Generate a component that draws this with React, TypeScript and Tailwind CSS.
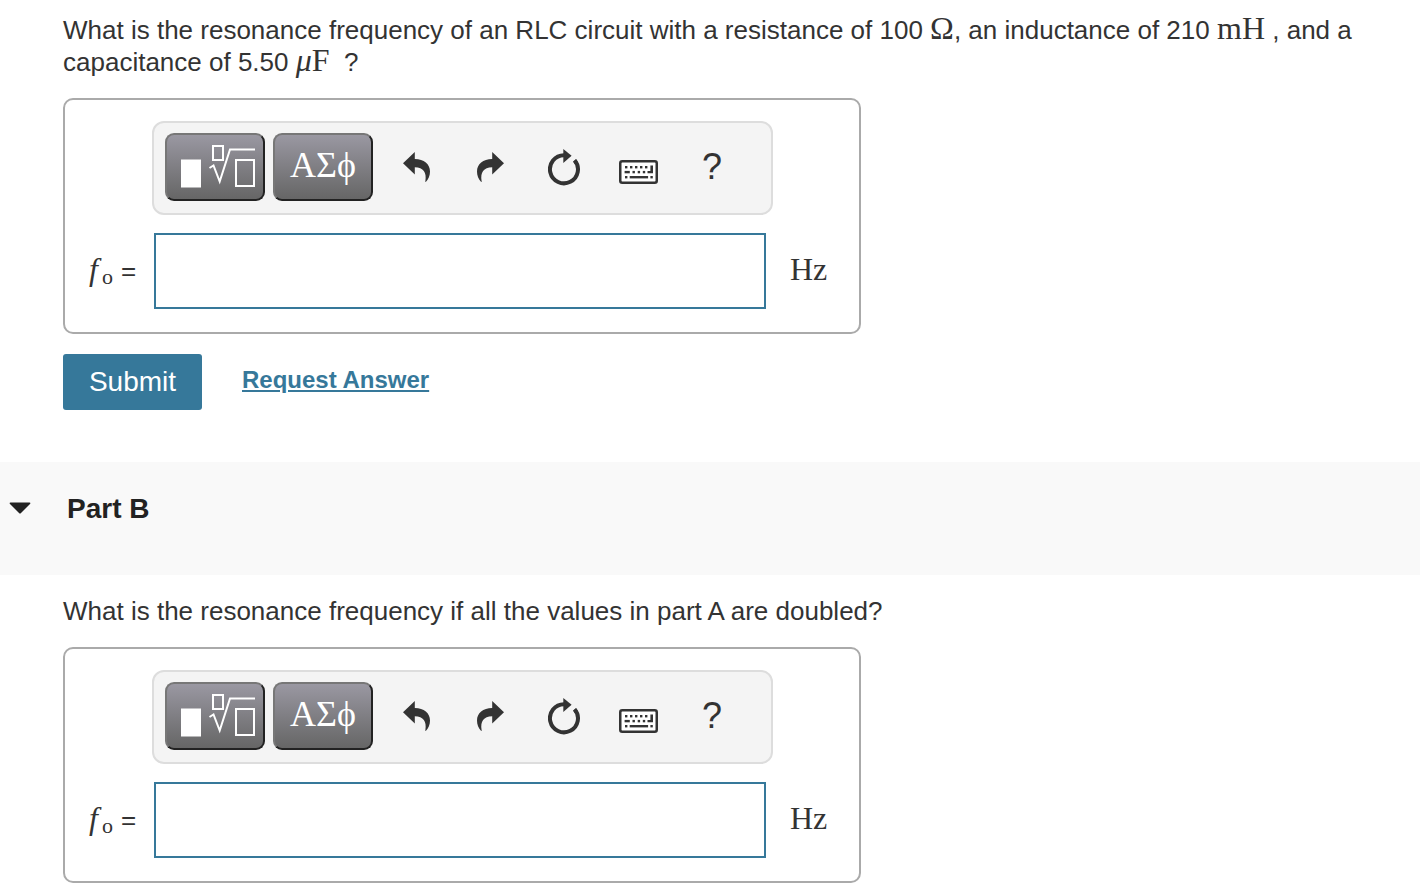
import React from 'react';

type MathProps = {
  children: React.ReactNode;
  italic?: boolean;
};

function MathText({ children, italic }: MathProps) {
  return (
    <span
      className={`font-['Liberation_Serif',serif] text-[32px] leading-6 ${
        italic ? 'italic' : ''
      }`}
    >
      {children}
    </span>
  );
}

function TemplatesIcon() {
  return (
    <svg viewBox="0 0 96 64" className="w-24 h-16" fill="none" aria-hidden="true">
      <rect x="14" y="24.5" width="20" height="28" fill="#fff" />
      <rect x="46" y="11" width="10" height="14" stroke="#fff" strokeWidth="2" />
      <path
        d="M42.5 33 L46.5 30.5 L52.7 46.5 L63 14.5 H88"
        stroke="#fff"
        strokeWidth="2"
      />
      <rect x="69" y="25" width="18" height="26" stroke="#fff" strokeWidth="2" />
    </svg>
  );
}

function UndoIcon({ flipped }: { flipped?: boolean }) {
  return (
    <svg
      viewBox="0 0 27 30"
      className={`w-[27px] h-[30px] ${flipped ? '-scale-x-100' : ''}`}
      fill="currentColor"
      aria-hidden="true"
    >
      <path d="M0 11.2 L11.8 0 V7 C21 7 27 12 27 19.5 C27 23.5 25.5 27 22.8 30 C22.5 30 22.2 29.6 22.4 29 C23.8 20.5 20.5 15.2 11.8 15.2 V22.6 Z" />
    </svg>
  );
}

function ResetIcon() {
  return (
    <svg viewBox="0 0 32 37" className="w-8 h-[37px]" fill="none" aria-hidden="true">
      <path d="M26.6 11.2 A14 14 0 1 1 16 6.3" stroke="currentColor" strokeWidth="4" />
      <path d="M15.3 0 L23.6 6.8 L15.3 14 Z" fill="currentColor" />
      <path d="M25.2 12.8 L28 10.3 L30 13.5 L27 15.5 Z" fill="currentColor" />
    </svg>
  );
}

function KeyboardIcon() {
  return (
    <svg viewBox="0 -10 39 34" className="w-[39px] h-[34px]" aria-hidden="true">
      <rect x="1.25" y="1.25" width="36.5" height="21.5" rx="2" fill="#fff" stroke="currentColor" strokeWidth="2.5" />
      <g fill="currentColor">
        {[6, 11, 16, 21, 26].map((x) => (
          <rect key={x} x={x} y="6" width="2.4" height="2.4" />
        ))}
        <path d="M31.4 5.5 H34 V13.3 H28.5 V10.9 H31.4 Z" />
        <rect x="5.6" y="10.9" width="5.2" height="2.4" />
        {[13.5, 18.7, 23.8].map((x) => (
          <rect key={x} x={x} y="10.9" width="2.4" height="2.4" />
        ))}
        <rect x="6" y="16" width="2.4" height="2.4" />
        <rect x="10.7" y="16" width="18.4" height="2.4" />
        <rect x="31.4" y="16" width="2.4" height="2.4" />
      </g>
    </svg>
  );
}

const darkButton =
  'w-[100px] h-[68px] shrink-0 flex items-center justify-center rounded-[9px] border-2 border-t-[#777] border-l-[#777] border-b-[#222] border-r-[#222] bg-linear-to-b from-[#9a98a2] to-[#666] text-white';

const iconButton = 'w-[74px] h-[68px] shrink flex items-center justify-center';

function Toolbar() {
  return (
    <div className="ml-[87px] mr-[86px] flex rounded-xl border-2 border-[#ddd] bg-[#f4f4f4] px-[11px] pt-[10px] pb-3">
      <button type="button" aria-label="Templates" className={darkButton}>
        <TemplatesIcon />
      </button>
      <button
        type="button"
        aria-label="Symbols"
        className={`${darkButton} ml-2 pb-1 font-['Liberation_Serif',serif] text-4xl leading-none`}
      >
        ΑΣϕ
      </button>
      <div className="ml-[6px] flex">
        <button type="button" aria-label="Undo" className={iconButton}>
          <UndoIcon />
        </button>
        <button type="button" aria-label="Redo" className={iconButton}>
          <UndoIcon flipped />
        </button>
        <button type="button" aria-label="Reset" className={iconButton}>
          <ResetIcon />
        </button>
        <button type="button" aria-label="Keyboard shortcuts" className={iconButton}>
          <KeyboardIcon />
        </button>
        <button type="button" aria-label="Help" className={`${iconButton} text-4xl`}>
          ?
        </button>
      </div>
    </div>
  );
}

function AnswerBox({ id }: { id: string }) {
  return (
    <div className="mt-5 max-w-[798px] rounded-[10px] border-2 border-[#aaa] pt-[21px] pb-[23px]">
      <Toolbar />
      <div className="mt-[18px] flex items-center">
        <label
          htmlFor={id}
          className="flex w-[89px] shrink-0 items-baseline pl-6 whitespace-nowrap"
        >
          <MathText italic>f</MathText>
          <sub className="bottom-[-4px] ml-1 font-['Liberation_Serif',serif] text-[22px] leading-6">
            o
          </sub>
          <span className="ml-2 text-[26px]">=</span>
        </label>
        <input
          id={id}
          type="text"
          className="h-[76px] min-w-0 flex-1 border-2 border-[#36789a] bg-white px-3 outline-none"
        />
        <span className="w-[93px] shrink-0 pl-6">
          <MathText>Hz</MathText>
        </span>
      </div>
    </div>
  );
}

export default function App() {
  return (
    <main className="min-h-screen bg-white pt-[14px] pb-3 font-['Liberation_Sans',Arial,sans-serif] text-[26px] leading-8 text-[#333]">
      <section className="pl-[63px] pr-[60px]">
        <p>
          What is the resonance frequency of an RLC circuit with a resistance of
          100 <MathText>Ω</MathText>, an inductance of 210{' '}
          <MathText>mH</MathText> , and a capacitance of 5.50{' '}
          <MathText italic>μ</MathText>
          <MathText>F</MathText>&nbsp; ?
        </p>
        <AnswerBox id="answer-a" />
        <div className="mt-5 flex items-center">
          <button
            type="button"
            className="h-14 w-[139px] rounded-[3px] bg-[#36789a] text-[28px] text-white"
          >
            Submit
          </button>
          <a
            href="#answer-a"
            className="ml-10 pb-1 text-2xl font-bold text-[#36789a] underline decoration-2 underline-offset-2"
          >
            Request Answer
          </a>
        </div>
      </section>

      <header className="mt-[52px] flex h-[113px] items-start bg-[#f9f9f9] pt-[31px] text-[#222]">
        <button
          type="button"
          aria-label="Collapse Part B"
          className="ml-[9px] flex h-[30px] w-[58px] items-center"
        >
          <svg viewBox="0 0 22 12" className="h-3 w-[22px]" fill="currentColor" aria-hidden="true">
            <path d="M1.5 0.5 H20.5 Q22 1 21 2 L12 11 Q11 12 10 11 L1 2 Q0 1 1.5 0.5 Z" />
          </svg>
        </button>
        <h2 className="text-[28px] leading-8 font-bold">Part B</h2>
      </header>

      <section className="pt-5 pl-[63px] pr-[60px]">
        <p>
          What is the resonance frequency if all the values in part A are
          doubled?
        </p>
        <AnswerBox id="answer-b" />
      </section>
    </main>
  );
}
